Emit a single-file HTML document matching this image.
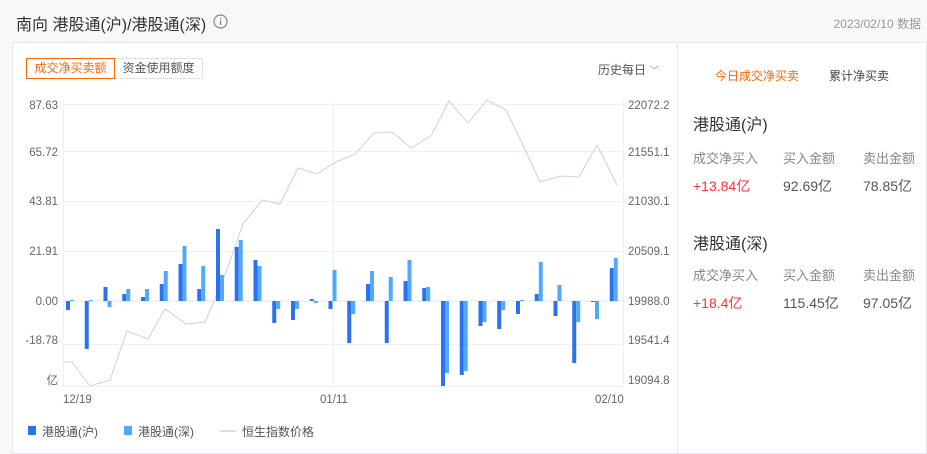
<!DOCTYPE html>
<html><head><meta charset="utf-8"><style>
*{margin:0;padding:0;box-sizing:border-box}
body{width:927px;height:454px;background:#f8f8f9;font-family:"Liberation Sans","Noto Sans CJK SC",sans-serif;position:relative;overflow:hidden;color:#333}
.a{position:absolute;white-space:nowrap}
.box{position:absolute;left:12px;top:42px;width:915px;height:412px;background:#fff;border:1px solid #e6e9ef}
.sep{position:absolute;left:677px;top:42px;width:1px;height:412px;background:#e6e9ef}
.lbl{font-size:12px;color:#666}
.hd{font-size:16px;color:#333}
.k{font-size:13px;color:#888}
.v{font-size:14px;color:#555}
</style></head><body>
<div class="a" style="left:16px;top:11px;font-size:16px;color:#333">南向 港股通(沪)/港股通(深)</div>
<svg class="a" style="left:213px;top:14px" width="15" height="15" viewBox="0 0 15 15"><circle cx="7.5" cy="7.5" r="6.5" fill="none" stroke="#888" stroke-width="1.2"/><rect x="6.9" y="6.3" width="1.3" height="4.7" fill="#888"/><rect x="6.9" y="3.8" width="1.3" height="1.4" fill="#888"/></svg>
<div class="a" style="right:6px;top:15px;font-size:12px;color:#999">2023/02/10 数据</div>
<div class="box"></div>
<div class="sep"></div>
<div class="a" style="left:26px;top:58px;width:89px;height:21px;border:1px solid #f60;color:#f60;font-size:12px;line-height:19px;text-align:center">成交净买卖额</div>
<div class="a" style="left:115px;top:58px;width:88px;height:21px;border:1px solid #dde1e8;border-left:none;color:#555;font-size:12px;line-height:19px;text-align:center">资金使用额度</div>
<div class="a" style="left:598px;top:61px;font-size:12px;color:#555">历史每日 <span style="color:#999;font-size:10px">﹀</span></div>
<svg class="a" style="left:0;top:0" width="680" height="454">
<g stroke="#eef0f4" stroke-width="1">
<line x1="63" y1="104.5" x2="624" y2="104.5"/><line x1="63" y1="151.5" x2="624" y2="151.5"/><line x1="63" y1="201.5" x2="624" y2="201.5"/><line x1="63" y1="251.5" x2="624" y2="251.5"/><line x1="63" y1="344.5" x2="624" y2="344.5"/><line x1="63" y1="386.5" x2="624" y2="386.5"/>
<line x1="63.5" y1="100" x2="63.5" y2="387"/><line x1="333.5" y1="100" x2="333.5" y2="387"/><line x1="623.5" y1="100" x2="623.5" y2="387"/>
</g>
<line x1="63" y1="301" x2="624" y2="301" stroke="#e0e4ea"/>
<polyline fill="none" stroke="#c9d3e2" stroke-width="1" points="63,362 72,362 90,386 110,380 127,331 148,339 165,309 186,324 205,322 224,278 243,224 262,200 280,204 298,168 317,174 336,162 355,154 374,133 392,132 411,148 431,136 449,101 468,123 487,100 506,110 522,143 540,182 560,176 579,177 597,145 617,185"/>
<g fill="#2b72ee">
<rect x="66" y="301" width="4" height="9"/><rect x="84.75" y="301" width="4" height="48"/><rect x="103.5" y="287" width="4" height="14"/><rect x="122.25" y="294" width="4" height="7"/><rect x="141" y="297" width="4" height="4"/><rect x="159.75" y="284" width="4" height="17"/><rect x="178.5" y="264" width="4" height="37"/><rect x="197.25" y="289" width="4" height="12"/><rect x="216" y="229" width="4" height="72"/><rect x="234.75" y="247" width="4" height="54"/><rect x="253.5" y="260" width="4" height="41"/><rect x="272.25" y="301" width="4" height="22"/><rect x="291" y="301" width="4" height="19"/><rect x="309.75" y="299" width="4" height="2"/><rect x="328.5" y="301" width="4" height="8"/><rect x="347.25" y="301" width="4" height="42"/><rect x="366" y="284" width="4" height="17"/><rect x="384.75" y="301" width="4" height="42"/><rect x="403.5" y="281" width="4" height="20"/><rect x="422.25" y="288" width="4" height="13"/><rect x="441" y="301" width="4" height="85"/><rect x="459.75" y="301" width="4" height="74"/><rect x="478.5" y="301" width="4" height="25"/><rect x="497.25" y="301" width="4" height="28"/><rect x="516" y="301" width="4" height="13"/><rect x="534.75" y="294" width="4" height="7"/><rect x="553.5" y="301" width="4" height="15"/><rect x="572.25" y="301" width="4" height="62"/><rect x="591" y="301" width="4" height="1"/><rect x="609.75" y="268" width="4" height="33"/>
</g>
<g fill="#52a9fb">
<rect x="70" y="300" width="4" height="1"/><rect x="88.75" y="300" width="4" height="1"/><rect x="107.5" y="301" width="4" height="6"/><rect x="126.25" y="289" width="4" height="12"/><rect x="145" y="289" width="4" height="12"/><rect x="163.75" y="271" width="4" height="30"/><rect x="182.5" y="246" width="4" height="55"/><rect x="201.25" y="266" width="4" height="35"/><rect x="220" y="275" width="4" height="26"/><rect x="238.75" y="240" width="4" height="61"/><rect x="257.5" y="266" width="4" height="35"/><rect x="276.25" y="301" width="4" height="8"/><rect x="295" y="301" width="4" height="8"/><rect x="313.75" y="301" width="4" height="2"/><rect x="332.5" y="270" width="4" height="31"/><rect x="351.25" y="301" width="4" height="13"/><rect x="370" y="271" width="4" height="30"/><rect x="388.75" y="277" width="4" height="24"/><rect x="407.5" y="260" width="4" height="41"/><rect x="426.25" y="287" width="4" height="14"/><rect x="445" y="301" width="4" height="72"/><rect x="463.75" y="301" width="4" height="70"/><rect x="482.5" y="301" width="4" height="21"/><rect x="501.25" y="301" width="4" height="9"/><rect x="520" y="300" width="4" height="1"/><rect x="538.75" y="262" width="4" height="39"/><rect x="557.5" y="285" width="4" height="16"/><rect x="576.25" y="301" width="4" height="21"/><rect x="595" y="301" width="4" height="18"/><rect x="613.75" y="258" width="4" height="43"/>
</g>
<g font-size="11.5" fill="#666" font-family="Liberation Sans,Noto Sans CJK SC,sans-serif">
<text x="58" y="109" text-anchor="end">87.63</text><text x="58" y="156" text-anchor="end">65.72</text><text x="58" y="205" text-anchor="end">43.81</text><text x="58" y="255" text-anchor="end">21.91</text><text x="58" y="305" text-anchor="end">0.00</text><text x="58" y="344" text-anchor="end">-18.78</text><text x="58" y="384" text-anchor="end">亿</text>
<text x="628" y="109">22072.2</text><text x="628" y="156">21551.1</text><text x="628" y="205">21030.1</text><text x="628" y="255">20509.1</text><text x="628" y="305">19988.0</text><text x="628" y="344">19541.4</text><text x="628" y="384">19094.8</text>
<text x="63" y="403">12/19</text><text x="320" y="403">01/11</text><text x="595" y="403">02/10</text>
</g>
<rect x="28" y="426" width="8" height="9" fill="#2b72ee"/><rect x="124" y="426" width="8" height="9" fill="#52a9fb"/><line x1="220" y1="431" x2="236" y2="431" stroke="#c9d3e2" stroke-width="1.5"/>
<g font-size="12" fill="#555" font-family="Liberation Sans,Noto Sans CJK SC,sans-serif"><text x="42" y="436">港股通(沪)</text><text x="138" y="436">港股通(深)</text><text x="242" y="436">恒生指数价格</text></g>
</svg>
<div class="a" style="left:715px;top:67px;font-size:12px;color:#f60">今日成交净买卖</div>
<div class="a" style="left:829px;top:67px;font-size:12px;color:#444">累计净买卖</div>
<div class="a hd" style="left:693px;top:111px">港股通(沪)</div>
<div class="a k" style="left:693px;top:148px">成交净买入</div><div class="a k" style="left:783px;top:148px">买入金额</div><div class="a k" style="left:863px;top:148px">卖出金额</div>
<div class="a v" style="left:693px;top:176px;color:#f33">+13.84亿</div><div class="a v" style="left:783px;top:176px">92.69亿</div><div class="a v" style="left:863px;top:176px">78.85亿</div>
<div class="a hd" style="left:693px;top:230px">港股通(深)</div>
<div class="a k" style="left:693px;top:265px">成交净买入</div><div class="a k" style="left:783px;top:265px">买入金额</div><div class="a k" style="left:863px;top:265px">卖出金额</div>
<div class="a v" style="left:693px;top:293px;color:#f33">+18.4亿</div><div class="a v" style="left:783px;top:293px">115.45亿</div><div class="a v" style="left:863px;top:293px">97.05亿</div>
</body></html>
